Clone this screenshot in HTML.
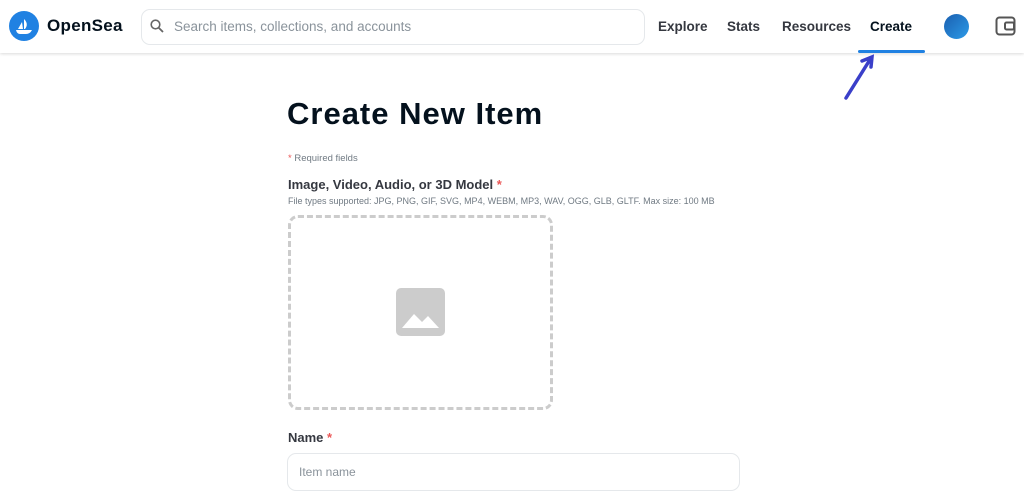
<!DOCTYPE html>
<html><head><style>
*{margin:0;padding:0;box-sizing:border-box}
body{width:1024px;height:502px;background:#fff;font-family:"Liberation Sans",sans-serif;color:#04111d;position:relative;overflow:hidden}
.hdr{position:absolute;left:0;top:0;width:1024px;height:53px;background:#fff;box-shadow:0 1px 3px rgba(0,0,0,.15)}
.a{position:absolute}
.nav{position:absolute;top:19px;font-size:13.5px;font-weight:bold;color:#353840}
</style></head><body>
<div class="hdr">
<div class="a" style="left:9px;top:11px;width:30px;height:30px;border-radius:50%;background:#2081e2"></div>
<svg class="a" style="left:9px;top:11px" width="30" height="30" viewBox="0 0 30 30"><path d="M9 18 L13 11 L14 18Z M15 8 Q20 13 16 18 L15 18Z M7 19 H23 Q21 23 17 23 H11 Q8 23 7 19Z" fill="#fff"/></svg>
<div class="a" style="left:47px;top:16px;font-size:17px;font-weight:bold;color:#04111d;letter-spacing:0.3px">OpenSea</div>
<div class="a" style="left:141px;top:9px;width:504px;height:36px;border:1px solid #e5e8eb;border-radius:9px"></div>
<svg class="a" style="left:150px;top:19px" width="14" height="14" viewBox="0 0 14 14"><circle cx="5.5" cy="5.5" r="4.3" fill="none" stroke="#666" stroke-width="1.6"/><path d="M8.7 8.7 L13 13" stroke="#666" stroke-width="1.8"/></svg>
<div class="a" style="left:174px;top:19px;font-size:13.5px;color:#8a939b">Search items, collections, and accounts</div>
<div class="nav" style="left:658px">Explore</div>
<div class="nav" style="left:727px">Stats</div>
<div class="nav" style="left:782px">Resources</div>
<div class="nav" style="left:870px;color:#04111d">Create</div>
<div class="a" style="left:858px;top:50px;width:67px;height:3px;background:#2081e2;border-radius:2px"></div>
<div class="a" style="left:944px;top:14px;width:25px;height:25px;border-radius:50%;background:linear-gradient(135deg,#1a5fb0,#2d9be8)"></div>
<svg class="a" style="left:995px;top:16px" width="21" height="20" viewBox="0 0 21 20"><rect x="1.5" y="1.5" width="18" height="17" rx="3" fill="none" stroke="#555" stroke-width="2"/><rect x="10" y="6.5" width="9" height="7" rx="1.5" fill="none" stroke="#555" stroke-width="2"/></svg>
</div>
<svg class="a" style="left:838px;top:52px" width="40" height="50" viewBox="0 0 40 50"><path d="M8 46 L33 6 M24 9 L34 5 L33 15" stroke="#3a3fc9" stroke-width="3.5" fill="none" stroke-linecap="round"/></svg>
<div class="a" style="left:287px;top:96px;font-size:31px;font-weight:bold;letter-spacing:1px">Create New Item</div>
<div class="a" style="left:288px;top:153px;font-size:9.5px;color:#707a83"><span style="color:#eb5757">*</span> Required fields</div>
<div class="a" style="left:288px;top:177px;font-size:13px;font-weight:bold;color:#353840">Image, Video, Audio, or 3D Model <span style="color:#eb5757">*</span></div>
<div class="a" style="left:288px;top:196px;font-size:9px;color:#707a83">File types supported: JPG, PNG, GIF, SVG, MP4, WEBM, MP3, WAV, OGG, GLB, GLTF. Max size: 100 MB</div>
<div class="a" style="left:288px;top:215px;width:265px;height:195px;border:3px dashed #ccc;border-radius:10px"></div>
<svg class="a" style="left:396px;top:288px" width="49" height="48" viewBox="0 0 49 48"><rect width="49" height="48" rx="5" fill="#ccc"/><path d="M6 40 L18 26 L26 34 L32 28 L43 40Z" fill="#fff"/><circle cx="37" cy="14" r="4" fill="#ccc"/></svg>
<div class="a" style="left:288px;top:430px;font-size:13px;font-weight:bold;color:#353840">Name <span style="color:#eb5757">*</span></div>
<div class="a" style="left:287px;top:453px;width:453px;height:38px;border:1px solid #e5e8eb;border-radius:9px"></div>
<div class="a" style="left:299px;top:465px;font-size:12px;color:#8a939b">Item name</div>
</body></html>
